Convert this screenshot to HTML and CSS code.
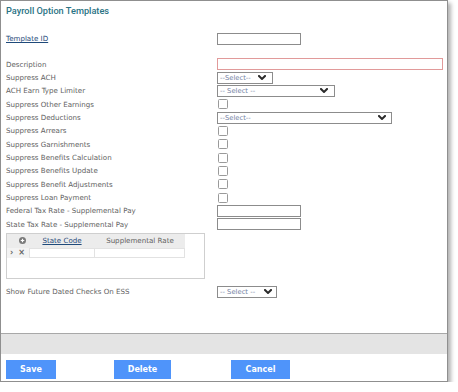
FILE: index.html
```html
<!DOCTYPE html>
<html>
<head>
<meta charset="utf-8">
<link rel="stylesheet" href="styles.css">
</head>
<body>
<div class="frame">
  <div class="title">Payroll Option Templates</div>
  <div class="form">
    <div class="row row-id">
      <a class="label link" href="#">Template ID</a>
      <div class="ctl"><input class="txt short" type="text"></div>
    </div>
    <div class="rows">
      <div class="row"><span class="label">Description</span><div class="ctl"><input class="txt wide req" type="text"></div></div>
      <div class="row"><span class="label">Suppress ACH</span><div class="ctl"><div class="sel s-ach"><span>--Select--</span><svg class="chev" viewBox="0 0 8 5"><path d="M1 1 L4 4 L7 1" /></svg></div></div></div>
      <div class="row"><span class="label">ACH Earn Type Limiter</span><div class="ctl"><div class="sel s-earn"><span>-- Select --</span><svg class="chev" viewBox="0 0 8 5"><path d="M1 1 L4 4 L7 1" /></svg></div></div></div>
      <div class="row"><span class="label">Suppress Other Earnings</span><div class="ctl"><span class="cb"></span></div></div>
      <div class="row"><span class="label">Suppress Deductions</span><div class="ctl"><div class="sel s-ded"><span>--Select--</span><svg class="chev" viewBox="0 0 8 5"><path d="M1 1 L4 4 L7 1" /></svg></div></div></div>
      <div class="row"><span class="label">Suppress Arrears</span><div class="ctl"><span class="cb"></span></div></div>
      <div class="row"><span class="label">Suppress Garnishments</span><div class="ctl"><span class="cb"></span></div></div>
      <div class="row"><span class="label">Suppress Benefits Calculation</span><div class="ctl"><span class="cb"></span></div></div>
      <div class="row"><span class="label">Suppress Benefits Update</span><div class="ctl"><span class="cb"></span></div></div>
      <div class="row"><span class="label">Suppress Benefit Adjustments</span><div class="ctl"><span class="cb"></span></div></div>
      <div class="row"><span class="label">Suppress Loan Payment</span><div class="ctl"><span class="cb"></span></div></div>
      <div class="row"><span class="label">Federal Tax Rate - Supplemental Pay</span><div class="ctl"><input class="txt short" type="text"></div></div>
      <div class="row"><span class="label">State Tax Rate - Supplemental Pay</span><div class="ctl"><input class="txt short" type="text"></div></div>
    </div>
    <div class="grid-box">
      <div class="g-row g-head">
        <div class="g-c1"><svg class="plus" viewBox="0 0 8 8"><circle cx="4" cy="4" r="4" fill="#7a7a7a"/><path d="M4 2 V6 M2 4 H6" stroke="#fff" stroke-width="1.4"/></svg></div>
        <div class="g-c2"><a href="#" class="g-link">State Code</a></div>
        <div class="g-c3">Supplemental Rate</div>
      </div>
      <div class="g-row g-data">
        <div class="g-c1"><span class="arrow">›</span><span class="del">×</span></div>
        <div class="g-c2 cell"></div>
        <div class="g-c3 cell"></div>
      </div>
    </div>
    <div class="row row-ess">
      <span class="label">Show Future Dated Checks On ESS</span>
      <div class="ctl"><div class="sel s-ess"><span>-- Select --</span><svg class="chev" viewBox="0 0 8 5"><path d="M1 1 L4 4 L7 1" /></svg></div></div>
    </div>
  </div>
  <div class="band"></div>
  <div class="buttons">
    <button class="btn b-save">Save</button>
    <button class="btn b-delete">Delete</button>
    <button class="btn b-cancel">Cancel</button>
  </div>
</div>
</body>
</html>
```

FILE: styles.css
```css
html, body {
  margin: 0;
  padding: 0;
  background: #fff;
}
body {
  font-family: "DejaVu Sans", Verdana, sans-serif;
  font-size: 7.1px;
  color: #626262;
}
.frame {
  box-sizing: border-box;
  width: 448px;
  height: 382px;
  border: 1px solid #8f8f8f;
  box-shadow: 3px 3px 4px rgba(0, 0, 0, 0.3);
  display: flex;
  flex-direction: column;
  background: #fff;
}
.title {
  height: 20px;
  line-height: 20px;
  padding-left: 5px;
  font-family: Roboto, "Liberation Sans", sans-serif;
  font-weight: 500;
  font-size: 9.2px;
  color: #2a7384;
}
.form {
  flex: 1;
  padding-left: 5px;
}
.row {
  display: grid;
  grid-template-columns: 211px 1fr;
  align-items: center;
  height: 13.33px;
}
.row-id {
  margin-top: 11px;
  height: 13px;
}
.rows {
  margin-top: 12.67px;
}
.label {
  white-space: nowrap;
}
.link {
  color: #1f4a7a;
  text-decoration: underline;
}
.ctl {
  display: flex;
  align-items: center;
}
.txt {
  box-sizing: border-box;
  height: 12px;
  margin: 0;
  padding: 0;
  border: 1px solid #8c8c8c;
  background: #fff;
  outline: none;
}
.short { width: 84px; }
.wide { width: 226px; }
.req { border-color: #e19a9a; }
.sel {
  box-sizing: border-box;
  height: 12px;
  border: 1px solid #8c8c8c;
  display: flex;
  align-items: center;
  justify-content: space-between;
  padding: 0 5px 0 2px;
  color: #7483a3;
  font-size: 6.8px;
  background: #fff;
}
.s-ach { width: 56px; padding-right: 6px; }
.s-earn { width: 118px; padding-right: 6px; }
.s-ded { width: 175px; padding-right: 5px; }
.s-ess { width: 60px; padding-right: 4px; }
.chev {
  width: 8px;
  height: 5px;
  fill: none;
  stroke: #2b2b2b;
  stroke-width: 2;
  stroke-linecap: square;
}
.cb {
  box-sizing: border-box;
  display: block;
  width: 10px;
  height: 10px;
  margin-left: 1px;
  border: 1px solid #9a9a9a;
  border-radius: 1.5px;
  background: #fff;
}
.grid-box {
  box-sizing: border-box;
  margin-top: 2px;
  width: 199px;
  height: 46px;
  border: 1px solid #cfcfcf;
}
.g-row {
  display: flex;
  width: 178px;
}
.g-head {
  height: 14px;
  background: #ececec;
  align-items: center;
}
.g-data {
  height: 10px;
}
.g-c1 {
  width: 22px;
  display: flex;
  align-items: center;
  justify-content: flex-end;
  height: 100%;
}
.g-head .g-c1 { padding-right: 3px; box-sizing: border-box; }
.plus { width: 7px; height: 7px; }
.g-c2 {
  width: 66px;
  text-align: center;
}
.g-c3 {
  width: 90px;
  text-align: center;
}
.g-link {
  color: #1f4a7a;
  text-decoration: underline;
}
.g-data .g-c1 {
  justify-content: flex-start;
  background: #f3f3f3;
  color: #666;
  font-weight: bold;
}
.arrow { margin-left: 3px; font-size: 8px; line-height: 8px; }
.del { margin-left: 5px; font-size: 8px; line-height: 8px; }
.cell {
  box-sizing: border-box;
  height: 10px;
  border: 1px solid #e2e2e2;
  background: #fff;
}
.g-c3.cell { border-left: none; }
.row-ess {
  margin-top: 6.5px;
  height: 13px;
}
.band {
  height: 20px;
  border-top: 1px solid #a8a8a8;
  background: #e4e4e4;
}
.buttons {
  height: 27px;
  box-sizing: border-box;
  padding-top: 6px;
  padding-left: 5px;
  display: flex;
  align-items: flex-start;
}
.btn {
  height: 19px;
  margin: 0;
  padding: 0;
  border: none;
  background: #4f94fa;
  color: #fff;
  font-family: "DejaVu Sans", Verdana, sans-serif;
  font-weight: bold;
  font-size: 8px;
}
.b-save { width: 50px; }
.b-delete { width: 57px; margin-left: 58px; }
.b-cancel { width: 59px; margin-left: 60px; }
```
